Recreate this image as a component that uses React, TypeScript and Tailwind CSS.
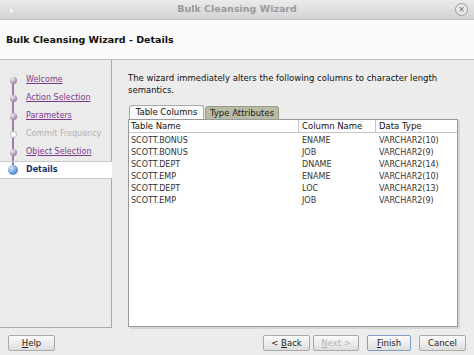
import React from "react";

const font = { fontFamily: '"DejaVu Sans", "Liberation Sans", sans-serif' };

function Bullet({ kind }: { kind: "done" | "disabled" | "current" }) {
  if (kind === "current") {
    return (
      <div className="w-[10px] h-[10px] rounded-full bg-[radial-gradient(circle_at_35%_30%,#d8e8fb,#5d93d8_60%,#3b6fb8)]" />
    );
  }
  if (kind === "disabled") {
    return <div className="w-[7px] h-[7px] rounded-full bg-white border border-[#b9b9b9]" />;
  }
  return (
    <div className="w-[7px] h-[7px] rounded-full bg-[radial-gradient(circle_at_35%_30%,#f1e8f3,#a98bb3_65%,#8a6696)]" />
  );
}

function NavItem({
  label,
  kind,
  first,
  last,
}: {
  label: string;
  kind: "done" | "disabled" | "current";
  first?: boolean;
  last?: boolean;
}) {
  const current = kind === "current";
  return (
    <div
      className={
        "flex items-center h-[18px] " +
        (current ? "bg-white border-y border-[#c9c9c9] mr-[-1px]" : "")
      }
    >
      <div className="relative w-[26px] h-full flex items-center justify-center">
        {!first && (
          <div className="absolute left-[12px] top-0 h-1/2 w-[2px] bg-[#9b7fa6]" />
        )}
        {!last && (
          <div className="absolute left-[12px] top-1/2 h-1/2 w-[2px] bg-[#9b7fa6]" />
        )}
        <div className="relative">
          <Bullet kind={kind} />
        </div>
      </div>
      <span
        className={
          "text-[8px] leading-none " +
          (kind === "done"
            ? "text-[#7d3a8c] underline"
            : kind === "disabled"
            ? "text-[#b3b3b3]"
            : "text-[#1c2f6e] font-bold")
        }
      >
        {label}
      </span>
    </div>
  );
}

function Btn({ children, disabled, def }: { children: React.ReactNode; disabled?: boolean; def?: boolean }) {
  return (
    <div
      className={
        "h-[16px] flex items-center justify-center text-[8.5px] rounded-[2px] border bg-gradient-to-b from-[#fbfbfb] to-[#dedede] " +
        (def ? "border-[#7f9dc4] " : "border-[#a9a9a9] ") +
        (disabled ? "text-[#b5b5b5]" : "text-[#222]")
      }
    >
      {children}
    </div>
  );
}

const rows = [
  ["SCOTT.BONUS", "ENAME", "VARCHAR2(10)"],
  ["SCOTT.BONUS", "JOB", "VARCHAR2(9)"],
  ["SCOTT.DEPT", "DNAME", "VARCHAR2(14)"],
  ["SCOTT.EMP", "ENAME", "VARCHAR2(10)"],
  ["SCOTT.DEPT", "LOC", "VARCHAR2(13)"],
  ["SCOTT.EMP", "JOB", "VARCHAR2(9)"],
];

export default function App() {
  return (
    <div className="w-[474px] h-[355px] bg-[#ececec] flex flex-col overflow-hidden" style={font}>
      {/* title bar */}
      <div className="h-[20px] relative flex items-center justify-center bg-gradient-to-b from-[#ebebeb] to-[#d3d3d3] border-b border-[#c4c4c4]">
        <div className="absolute left-[10px] top-[9px] w-[3px] h-[3px] rounded-full bg-white" />
        <span className="text-[9.5px] font-bold text-[#9a9a9a]">Bulk Cleansing Wizard</span>
        <div className="absolute right-[6px] top-[3px] w-[13px] h-[13px] rounded-full border border-[#9a9a9a] bg-[#e9e9e9] flex items-center justify-center text-[8px] leading-none text-[#666]">
          ×
        </div>
      </div>
      {/* header */}
      <div className="h-[40px] bg-[#fafafa] border-b border-[#bdbdbd] flex items-center pl-[6px] pt-[2px]">
        <span className="text-[9.5px] font-bold text-[#111]">Bulk Cleansing Wizard - Details</span>
      </div>
      {/* middle */}
      <div className="flex h-[268px]">
        <div className="w-[112px] border-r border-b border-[#a9a9a9] bg-[#ebebeb] pt-[11px]">
          <NavItem label="Welcome" kind="done" first />
          <NavItem label="Action Selection" kind="done" />
          <NavItem label="Parameters" kind="done" />
          <NavItem label="Commit Frequency" kind="disabled" />
          <NavItem label="Object Selection" kind="done" />
          <NavItem label="Details" kind="current" last />
        </div>
        <div className="flex-1 pl-[16px] pr-[16px] flex flex-col">
          <div className="pt-[12px] text-[8.5px] leading-[12px] text-[#111]">
            The wizard immediately alters the following columns to character length semantics.
          </div>
          <div className="mt-[9px] flex items-end h-[14px] pl-[1px]">
            <div className="h-[14px] w-[75px] bg-[#fafafa] border border-b-0 border-[#a9a9a9] rounded-t-[3px] flex items-center justify-center text-[8.5px] text-[#111]">
              Table Columns
            </div>
            <div className="h-[13px] w-[74px] ml-[1px] bg-[#b9bba4] border border-b-0 border-[#9a9a88] rounded-t-[3px] flex items-center justify-center text-[8.5px] text-[#222]">
              Type Attributes
            </div>
          </div>
          <div className="flex-1 bg-white border border-[#9a9a9a] shadow-[2px_2px_0_#d4d4d4] mb-[1px]">
            <div className="grid grid-cols-[170px_77px_1fr] h-[13px] border-b border-[#c5c5c5] text-[8.5px] text-[#111]">
              <div className="border-r border-[#c5c5c5] pl-[2px] flex items-center">Table Name</div>
              <div className="border-r border-[#c5c5c5] pl-[3px] flex items-center">Column Name</div>
              <div className="pl-[3px] flex items-center">Data Type</div>
            </div>
            <div className="pt-[2px]">
              {rows.map((r, i) => (
                <div key={i} className="grid grid-cols-[170px_77px_1fr] h-[12px] text-[8px] text-[#333] items-center">
                  <div className="pl-[2px]">{r[0]}</div>
                  <div className="pl-[3px]">{r[1]}</div>
                  <div className="pl-[3px]">{r[2]}</div>
                </div>
              ))}
            </div>
          </div>
        </div>
      </div>
      {/* footer */}
      <div className="flex-1 flex items-center px-[8px] pt-[3px]">
        <div className="w-[47px]">
          <Btn>
            <span>
              <span className="underline">H</span>elp
            </span>
          </Btn>
        </div>
        <div className="flex-1" />
        <div className="w-[47px]">
          <Btn>
            <span>
              &lt; <span className="underline">B</span>ack
            </span>
          </Btn>
        </div>
        <div className="w-[46px] ml-[3px]">
          <Btn disabled>
            <span>
              <span className="underline">N</span>ext &gt;
            </span>
          </Btn>
        </div>
        <div className="w-[44px] ml-[8px]">
          <Btn def>
            <span>
              <span className="underline">F</span>inish
            </span>
          </Btn>
        </div>
        <div className="w-[47px] ml-[8px]">
          <Btn>Cancel</Btn>
        </div>
      </div>
    </div>
  );
}
